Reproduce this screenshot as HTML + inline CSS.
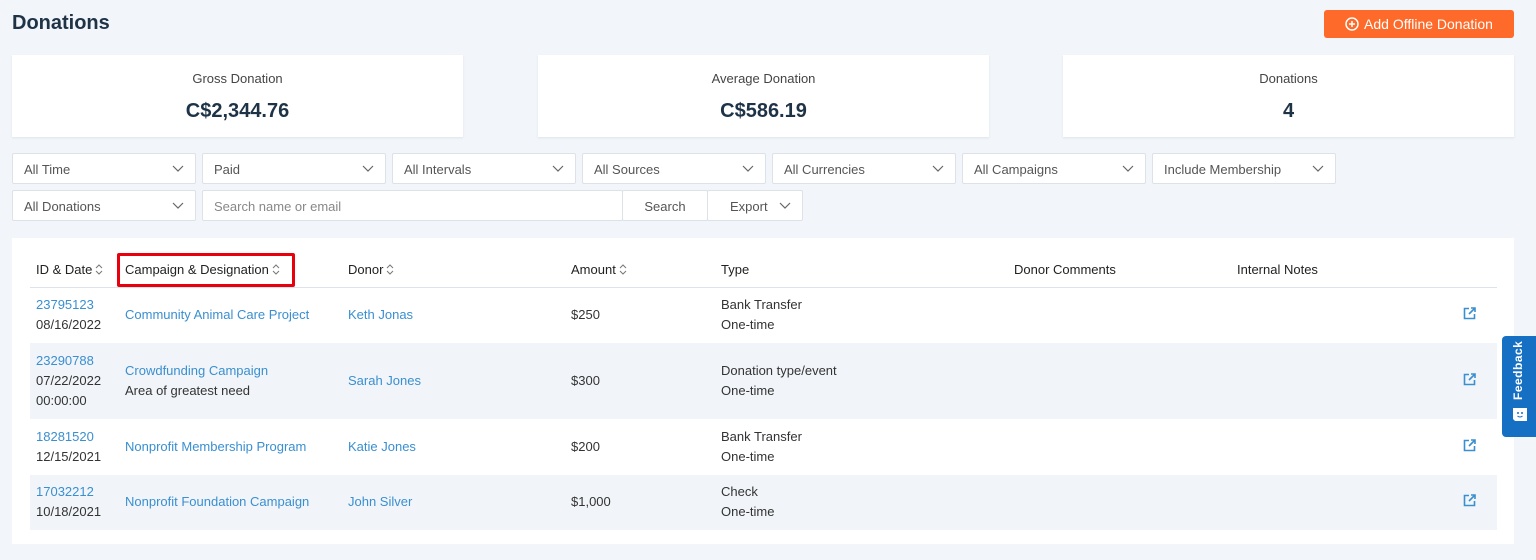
<!DOCTYPE html>
<html><head><style>
*{box-sizing:border-box;margin:0;padding:0}
body{width:1536px;height:560px;background:#f2f5f9;font-family:"Liberation Sans",sans-serif;color:#333;position:relative;overflow:hidden;font-size:13px}
.abs{position:absolute}
h1{position:absolute;left:12px;top:12px;font-size:20px;font-weight:bold;color:#1f3347}
.btn{left:1324px;top:10px;width:190px;height:28px;background:#fd6a2a;border-radius:3px;color:#fff;font-size:14px;display:flex;align-items:center;justify-content:center;gap:5px}
.card{background:#fff;top:55px;height:82px;width:451px;text-align:center;box-shadow:0 1px 2px #dde4ec}
.card .l{margin-top:16px;font-size:13px;color:#444}
.card .v{margin-top:14px;font-size:20px;font-weight:bold;color:#1f3347}
.sel{background:#fff;border:1px solid #dde2e8;height:31px;border-radius:2px;font-size:13px;color:#555;padding:8px 11px}
.sel svg{position:absolute;right:11px;top:11px}
.tbl{left:12px;top:238px;width:1502px;height:306px;background:#fff}
.th{top:260px;font-size:13px;color:#222}
.c{position:absolute;font-size:13px;line-height:20px}
.b{color:#3a8fd0}
.row{position:absolute;left:30px;width:1467px;background:#f1f5f9}
.ic{position:absolute;left:1463px}
.s{display:inline-block;vertical-align:-1px;margin-left:3px}
</style></head><body>
<h1>Donations</h1>
<div class="abs btn"><svg width="14" height="14" viewBox="0 0 14 14"><circle cx="7" cy="7" r="6" fill="none" stroke="#fff" stroke-width="1.5"/><path d="M7 4v6M4 7h6" stroke="#fff" stroke-width="1.5"/></svg>Add Offline Donation</div>
<div class="abs card" style="left:12px"><div class="l">Gross Donation</div><div class="v">C$2,344.76</div></div>
<div class="abs card" style="left:538px"><div class="l">Average Donation</div><div class="v">C$586.19</div></div>
<div class="abs card" style="left:1063px"><div class="l">Donations</div><div class="v">4</div></div>

<div class="abs sel" style="left:12px;top:153px;width:184px">All Time<svg width="12" height="8"><path d="M1 1l5 5 5-5" fill="none" stroke="#666" stroke-width="1.2"/></svg></div>
<div class="abs sel" style="left:202px;top:153px;width:184px">Paid<svg width="12" height="8"><path d="M1 1l5 5 5-5" fill="none" stroke="#666" stroke-width="1.2"/></svg></div>
<div class="abs sel" style="left:392px;top:153px;width:184px">All Intervals<svg width="12" height="8"><path d="M1 1l5 5 5-5" fill="none" stroke="#666" stroke-width="1.2"/></svg></div>
<div class="abs sel" style="left:582px;top:153px;width:184px">All Sources<svg width="12" height="8"><path d="M1 1l5 5 5-5" fill="none" stroke="#666" stroke-width="1.2"/></svg></div>
<div class="abs sel" style="left:772px;top:153px;width:184px">All Currencies<svg width="12" height="8"><path d="M1 1l5 5 5-5" fill="none" stroke="#666" stroke-width="1.2"/></svg></div>
<div class="abs sel" style="left:962px;top:153px;width:184px">All Campaigns<svg width="12" height="8"><path d="M1 1l5 5 5-5" fill="none" stroke="#666" stroke-width="1.2"/></svg></div>
<div class="abs sel" style="left:1152px;top:153px;width:184px">Include Membership<svg width="12" height="8"><path d="M1 1l5 5 5-5" fill="none" stroke="#666" stroke-width="1.2"/></svg></div>
<div class="abs sel" style="left:12px;top:190px;width:184px">All Donations<svg width="12" height="8"><path d="M1 1l5 5 5-5" fill="none" stroke="#666" stroke-width="1.2"/></svg></div>
<div class="abs sel" style="left:202px;top:190px;width:421px;color:#888">Search name or email</div>
<div class="abs sel" style="left:622px;top:190px;width:86px;text-align:center">Search</div>
<div class="abs sel" style="left:707px;top:190px;width:96px;padding-left:22px">Export<svg width="12" height="8"><path d="M1 1l5 5 5-5" fill="none" stroke="#666" stroke-width="1.2"/></svg></div>

<div class="abs tbl"></div>
<div class="abs" style="left:30px;top:287px;width:1467px;height:1px;background:#dde3ea"></div>
<div class="abs" style="left:117px;top:253px;width:178px;height:34px;border:3px solid #e8000d;border-radius:2px"></div>
<div class="c th" style="left:36px">ID &amp; Date<svg class="s" width="8" height="11" viewBox="0 0 8 11"><path d="M1 4l3-3 3 3M1 7l3 3 3-3" fill="none" stroke="#777" stroke-width="1"/></svg></div>
<div class="c th" style="left:125px">Campaign &amp; Designation<svg class="s" width="8" height="11" viewBox="0 0 8 11"><path d="M1 4l3-3 3 3M1 7l3 3 3-3" fill="none" stroke="#777" stroke-width="1"/></svg></div>
<div class="c th" style="left:348px">Donor<svg class="s" width="8" height="11" viewBox="0 0 8 11"><path d="M1 4l3-3 3 3M1 7l3 3 3-3" fill="none" stroke="#777" stroke-width="1"/></svg></div>
<div class="c th" style="left:571px">Amount<svg class="s" width="8" height="11" viewBox="0 0 8 11"><path d="M1 4l3-3 3 3M1 7l3 3 3-3" fill="none" stroke="#777" stroke-width="1"/></svg></div>
<div class="c th" style="left:721px">Type</div>
<div class="c th" style="left:1014px">Donor Comments</div>
<div class="c th" style="left:1237px">Internal Notes</div>

<div class="row" style="top:343px;height:76px"></div>
<div class="row" style="top:475px;height:55px"></div>

<div class="c" style="left:36px;top:295px"><span class="b">23795123</span><br>08/16/2022</div>
<div class="c b" style="left:125px;top:305px">Community Animal Care Project</div>
<div class="c b" style="left:348px;top:305px">Keth Jonas</div>
<div class="c" style="left:571px;top:305px">$250</div>
<div class="c" style="left:721px;top:295px">Bank Transfer<br>One-time</div>

<div class="c" style="left:36px;top:351px"><span class="b">23290788</span><br>07/22/2022<br>00:00:00</div>
<div class="c" style="left:125px;top:361px"><span class="b">Crowdfunding Campaign</span><br>Area of greatest need</div>
<div class="c b" style="left:348px;top:371px">Sarah Jones</div>
<div class="c" style="left:571px;top:371px">$300</div>
<div class="c" style="left:721px;top:361px">Donation type/event<br>One-time</div>

<div class="c" style="left:36px;top:427px"><span class="b">18281520</span><br>12/15/2021</div>
<div class="c b" style="left:125px;top:437px">Nonprofit Membership Program</div>
<div class="c b" style="left:348px;top:437px">Katie Jones</div>
<div class="c" style="left:571px;top:437px">$200</div>
<div class="c" style="left:721px;top:427px">Bank Transfer<br>One-time</div>

<div class="c" style="left:36px;top:482px"><span class="b">17032212</span><br>10/18/2021</div>
<div class="c b" style="left:125px;top:492px">Nonprofit Foundation Campaign</div>
<div class="c b" style="left:348px;top:492px">John Silver</div>
<div class="c" style="left:571px;top:492px">$1,000</div>
<div class="c" style="left:721px;top:482px">Check<br>One-time</div>

<svg class="ic" style="top:307px" width="13" height="13" viewBox="0 0 13 13"><path d="M6 1.5H1.5v10h10V7M8 1h4v4M12 1L6 7" fill="none" stroke="#3a8fd0" stroke-width="1.6"/></svg>
<svg class="ic" style="top:373px" width="13" height="13" viewBox="0 0 13 13"><path d="M6 1.5H1.5v10h10V7M8 1h4v4M12 1L6 7" fill="none" stroke="#3a8fd0" stroke-width="1.6"/></svg>
<svg class="ic" style="top:439px" width="13" height="13" viewBox="0 0 13 13"><path d="M6 1.5H1.5v10h10V7M8 1h4v4M12 1L6 7" fill="none" stroke="#3a8fd0" stroke-width="1.6"/></svg>
<svg class="ic" style="top:494px" width="13" height="13" viewBox="0 0 13 13"><path d="M6 1.5H1.5v10h10V7M8 1h4v4M12 1L6 7" fill="none" stroke="#3a8fd0" stroke-width="1.6"/></svg>

<div class="abs" style="left:1502px;top:336px;width:36px;height:101px;background:#1570c4;border-radius:4px 0 0 4px">
<div class="abs" style="left:9px;top:64px;transform:rotate(-90deg);transform-origin:0 0;color:#fff;font-size:12px;font-weight:bold;white-space:nowrap;letter-spacing:0.5px">Feedback</div>
<svg class="abs" style="left:11px;top:72px" width="14" height="13" viewBox="0 0 14 13"><path d="M0 0h14v13H2L0 11z" fill="#fff"/><circle cx="5" cy="5" r="1" fill="#1570c4"/><circle cx="9" cy="5" r="1" fill="#1570c4"/><path d="M4.5 8q2.5 2 5 0" stroke="#1570c4" fill="none"/></svg>
</div>
</body></html>
